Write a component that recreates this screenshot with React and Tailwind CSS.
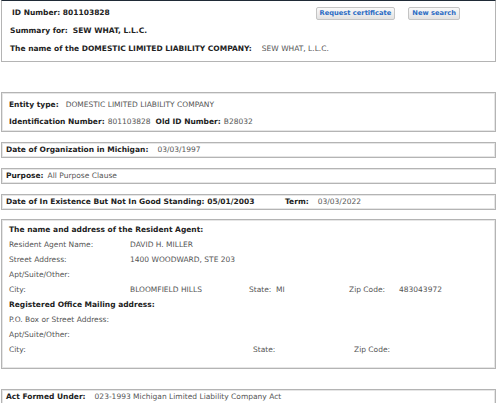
import React from "react";

const font = { fontFamily: '"DejaVu Sans", Verdana, sans-serif' };

function Box({ className = "", children }) {
  return (
    <div className={`border border-[#b4b4b4] shadow-[inset_0_0_0_1px_#e6e6e6] bg-white ${className}`}>
      {children}
    </div>
  );
}

function Btn({ children }) {
  return (
    <button className="h-[13px] px-[3px] flex items-center border border-[#c4c4c4] rounded-[2px] bg-gradient-to-b from-[#fafafa] to-[#e2e2e2] text-[#2b6cc4] font-bold text-[6.7px] leading-none">
      {children}
    </button>
  );
}

function Row({ label, value, city }) {
  return (
    <div className="h-[15px] flex items-center">
      <span className="w-[121px] shrink-0">{label}</span>
      <span className="w-[119px] shrink-0">{value}</span>
      {city && (
        <>
          <span className="w-[27px] shrink-0">State:</span>
          <span className="w-[73px] shrink-0">MI</span>
          <span className="w-[50px] shrink-0">Zip Code:</span>
          <span>483043972</span>
        </>
      )}
    </div>
  );
}

export default function App() {
  return (
    <div style={font} className="w-[500px] h-[403px] overflow-hidden bg-white text-[7.5px] leading-none text-[#555] pl-[1px] pr-[4px]">
      {/* summary header */}
      <div className="h-[62px] border border-[#b4b4b4] border-t-[#1f2a36] bg-white px-[8px] pt-[3px] flex flex-col">
        <div className="h-[18px] flex items-center">
          <span className="font-bold text-[#222] pl-[2px]">ID Number: 801103828</span>
          <div className="ml-auto flex gap-[13px] mr-[27px]">
            <Btn>Request certificate</Btn>
            <Btn>New search</Btn>
          </div>
        </div>
        <div className="h-[18px] flex items-center">
          <span className="font-bold text-[#222]">Summary for:</span>
          <span className="font-bold text-[#222] ml-[5px]">SEW WHAT, L.L.C.</span>
        </div>
        <div className="h-[18px] flex items-center">
          <span className="font-bold text-[#222]">The name of the DOMESTIC LIMITED LIABILITY COMPANY:</span>
          <span className="ml-[10px]">SEW WHAT, L.L.C.</span>
        </div>
      </div>

      <Box className="mt-[30px] h-[40px] px-[7px] pt-[3px] flex flex-col">
        <div className="h-[17px] flex items-center">
          <span className="font-bold text-[#222]">Entity type:</span>
          <span className="ml-[7px]">DOMESTIC LIMITED LIABILITY COMPANY</span>
        </div>
        <div className="h-[17px] flex items-center">
          <span className="font-bold text-[#222]">Identification Number:</span>
          <span className="ml-[3px]">801103828</span>
          <span className="font-bold text-[#222] ml-[5px]">Old ID Number:</span>
          <span className="ml-[3px]">B28032</span>
        </div>
      </Box>

      <Box className="mt-[10px] h-[16px] px-[4px] flex items-center">
        <span className="font-bold text-[#222]">Date of Organization in Michigan:</span>
        <span className="ml-[9px]">03/03/1997</span>
      </Box>

      <Box className="mt-[10px] h-[16px] px-[4px] flex items-center">
        <span className="font-bold text-[#222]">Purpose:</span>
        <span className="ml-[4px]">All Purpose Clause</span>
      </Box>

      <Box className="mt-[10px] h-[16px] px-[4px] flex items-center">
        <span className="font-bold text-[#222] w-[279px] shrink-0">Date of In Existence But Not In Good Standing: 05/01/2003</span>
        <span className="font-bold text-[#222]">Term:</span>
        <span className="ml-[9px]">03/03/2022</span>
      </Box>

      <Box className="mt-[9px] h-[150px] px-[7px] pt-[2px] flex flex-col">
        <div className="h-[15px] flex items-center font-bold text-[#222]">The name and address of the Resident Agent:</div>
        <Row label="Resident Agent Name:" value="DAVID H. MILLER" />
        <Row label="Street Address:" value="1400 WOODWARD, STE 203" />
        <Row label="Apt/Suite/Other:" value="" />
        <Row label="City:" value="BLOOMFIELD HILLS" city />
        <div className="h-[15px] flex items-center font-bold text-[#222]">Registered Office Mailing address:</div>
        <Row label="P.O. Box or Street Address:" value="" />
        <Row label="Apt/Suite/Other:" value="" />
        <div className="h-[15px] flex items-center">
          <span className="w-[244px] shrink-0">City:</span>
          <span className="w-[101px] shrink-0">State:</span>
          <span>Zip Code:</span>
        </div>
      </Box>

      <Box className="mt-[20px] h-[16px] px-[4px] flex items-center">
        <span className="font-bold text-[#222]">Act Formed Under:</span>
        <span className="ml-[9px]">023-1993 Michigan Limited Liability Company Act</span>
      </Box>
    </div>
  );
}
